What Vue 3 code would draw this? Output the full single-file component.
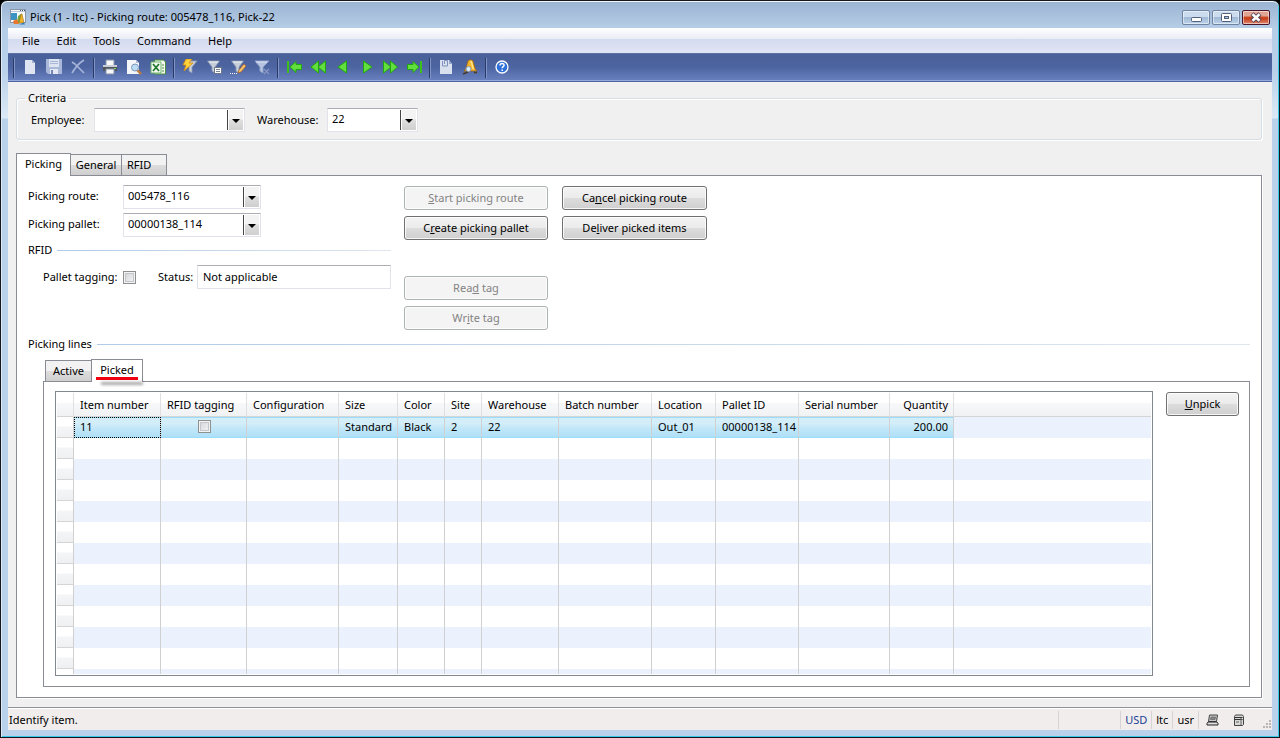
<template>
  <div class="window">
    <header class="title-bar">
      <svg class="icon" viewBox="0 0 16 16" aria-hidden="true">
        <rect x="0.5" y="0.5" width="15" height="13" fill="#f8fafc" stroke="#8a96a8" />
        <path d="M1 2.5h14" stroke="#b9c6d6" />
        <path d="M10 1.5h1M12 1.5h1M14 1.5h1" stroke="#40506a" />
        <rect x="1" y="4" width="6" height="7" fill="#3b93c4" />
        <path d="M7 14l1-7 3-2v9z" fill="#6aa845" />
        <path d="M9 14l2-9h1l2 9z" fill="#f0b42c" stroke="#a36c10" stroke-width="0.6" />
        <path d="M3 12l4-2 2 5H4z" fill="#e8762c" />
        <path d="M9 15.5l5-2 1 2z" fill="#2e7fc2" />
      </svg>
      <h1 class="title-bar__text">Pick (1 - ltc) - Picking route: 005478_116, Pick-22</h1>
      <div class="title-bar__buttons">
        <button type="button" class="caption" aria-label="Minimize">
          <svg viewBox="0 0 26 13"><rect x="8.5" y="6.5" width="10" height="4" rx="1" fill="#fff" stroke="#53607a" /></svg>
        </button>
        <button type="button" class="caption" aria-label="Maximize">
          <svg viewBox="0 0 26 13">
            <rect x="8.5" y="2.5" width="10" height="8" rx="1" fill="#fff" stroke="#53607a" />
            <rect x="11.5" y="5.5" width="4" height="2" fill="#a9c0dc" stroke="#53607a" />
          </svg>
        </button>
        <button type="button" class="caption caption--close" aria-label="Close">
          <svg viewBox="0 0 26 13">
            <path d="M9 3l8 7M17 3l-8 7" stroke="#53405a" stroke-width="4.5" />
            <path d="M9.5 3.3l7 6.4M16.5 3.3l-7 6.4" stroke="#fff" stroke-width="2.6" />
          </svg>
        </button>
      </div>
    </header>

    <nav class="menu-bar" aria-label="Main menu">
      <button v-for="m in menus" :key="m" type="button" class="menu-bar__item">{{ m }}</button>
    </nav>

    <div class="toolbar" role="toolbar" aria-label="Standard">
      <template v-for="(group, g) in toolGroups" :key="g">
        <span class="toolbar__sep" />
        <button
          v-for="tool in group"
          :key="tool.label"
          type="button"
          class="toolbar__btn"
          :aria-label="tool.label"
        >
          <svg class="icon" viewBox="0 0 16 16">
            <path
              v-for="(s, i) in tool.shapes"
              :key="i"
              :d="s[0]"
              :fill="s[1]"
              :stroke="s[2] || 'none'"
              :stroke-width="s[3] || 1"
            />
          </svg>
        </button>
      </template>
    </div>

    <main class="client">
      <fieldset class="criteria">
        <legend class="criteria__legend">Criteria</legend>
        <div class="criteria__row">
          <label for="employee">Employee:</label>
          <span class="combo combo--employee">
            <select id="employee"><option></option></select>
            <span class="combo__arrow" />
          </span>
          <label for="warehouse">Warehouse:</label>
          <span class="combo combo--warehouse">
            <select id="warehouse"><option>22</option></select>
            <span class="combo__arrow" />
          </span>
        </div>
      </fieldset>

      <div class="tabs" role="tablist">
        <button
          v-for="t in mainTabs"
          :key="t"
          type="button"
          role="tab"
          class="tab"
          :class="{ 'tab--active': t === mainTab }"
          :aria-selected="t === mainTab"
          @click="mainTab = t"
        >
          {{ t }}
        </button>
      </div>

      <section class="panel">
        <div class="top">
          <div class="fields">
            <div class="field">
              <label for="route">Picking route:</label>
              <span class="combo">
                <select id="route"><option>005478_116</option></select>
                <span class="combo__arrow" />
              </span>
            </div>
            <div class="field">
              <label for="pallet">Picking pallet:</label>
              <span class="combo">
                <select id="pallet"><option>00000138_114</option></select>
                <span class="combo__arrow" />
              </span>
            </div>
            <h2 class="heading heading--rfid">RFID</h2>
            <div class="rfid">
              <label for="tagging">Pallet tagging:</label>
              <input id="tagging" type="checkbox" class="check" />
              <label for="status">Status:</label>
              <input id="status" type="text" class="text-box" value="Not applicable" readonly />
            </div>
          </div>
          <div class="actions">
            <button type="button" class="btn" disabled><u>S</u>tart picking route</button>
            <button type="button" class="btn">Ca<u>n</u>cel picking route</button>
            <button type="button" class="btn">C<u>r</u>eate picking pallet</button>
            <button type="button" class="btn">De<u>l</u>iver picked items</button>
            <button type="button" class="btn actions__read" disabled>Rea<u>d</u> tag</button>
            <button type="button" class="btn actions__write" disabled>Wr<u>i</u>te tag</button>
          </div>
        </div>

        <h2 class="heading">Picking lines</h2>

        <div class="lines">
          <div class="tabs tabs--inner" role="tablist">
            <button
              v-for="t in lineTabs"
              :key="t"
              type="button"
              role="tab"
              class="tab"
              :class="{ 'tab--active': t === lineTab, 'tab--marked': t === 'Picked' }"
              :aria-selected="t === lineTab"
              @click="lineTab = t"
            >
              {{ t }}
            </button>
          </div>
          <div class="panel panel--inner">
            <div class="grid-box">
              <table class="grid">
                <colgroup>
                  <col class="w-head" />
                  <col v-for="c in columns" :key="c.key" :class="`w-${c.key}`" />
                  <col />
                </colgroup>
                <thead>
                  <tr>
                    <th class="grid__corner"></th>
                    <th v-for="c in columns" :key="c.key" :class="{ right: c.right }">{{ c.title }}</th>
                    <th class="grid__rest"></th>
                  </tr>
                </thead>
                <tbody>
                  <tr v-for="(row, r) in rows" :key="r" :class="{ selected: r === 0 }">
                    <th class="grid__head"></th>
                    <td v-for="c in columns" :key="c.key" :class="{ right: c.right, focused: r === 0 && c.key === 'item' }">
                      <input
                        v-if="c.key === 'rfid' && r === 0"
                        type="checkbox"
                        class="check check--cell"
                        aria-label="RFID tagging"
                      />
                      <template v-else>{{ row[c.key] }}</template>
                    </td>
                    <td class="grid__rest"></td>
                  </tr>
                </tbody>
              </table>
            </div>
            <button type="button" class="btn btn--unpick"><u>U</u>npick</button>
          </div>
        </div>
      </section>
    </main>

    <footer class="status-bar">
      <span class="status-bar__text">Identify item.</span>
      <span class="status-bar__cell status-bar__cell--wide" />
      <span class="status-bar__cell status-bar__cell--link">USD</span>
      <span class="status-bar__cell">ltc</span>
      <span class="status-bar__cell">usr</span>
      <span class="status-bar__cell status-bar__icons">
        <svg viewBox="0 0 13 12" aria-hidden="true">
          <path d="M3.5 1h8l-1 6.500h-8z" fill="#c8c8c8" stroke="#444" />
          <path d="M5 3h4.500l-.5 2.500H4.500z" fill="#888" stroke="#555" stroke-width="0.6" />
          <path d="M1 9.5l1-1.500h9l1 1.500v1.500H1z" fill="#ddd" stroke="#222" />
        </svg>
        <svg viewBox="0 0 13 12" aria-hidden="true">
          <path d="M2.500 2.500l1-1.500h7l1 1.500v8l-1 1h-8z" fill="#d8d8d8" stroke="#444" />
          <path d="M2.500 3.500h8M2.500 5.500h8" fill="none" stroke="#333" />
          <path d="M9 4v7M4 8h3" fill="none" stroke="#666" />
        </svg>
      </span>
      <svg class="status-bar__grip" viewBox="0 0 10 10" aria-hidden="true">
        <path d="M8 1h2M5 4h2M8 4h2M2 7h2M5 7h2M8 7h2" stroke="#b8b4b4" stroke-width="2" />
      </svg>
    </footer>
  </div>
</template>

<script setup>
import { ref } from 'vue';

const menus = ['File', 'Edit', 'Tools', 'Command', 'Help'];
const mainTabs = ['Picking', 'General', 'RFID'];
const lineTabs = ['Active', 'Picked'];
const mainTab = ref('Picking');
const lineTab = ref('Picked');

const GREEN = '#62de3e';
const EDGE = '#22a80f';
const BAR = '#3cc01c';
const funnel = ['M1.500 2h12L9 8v6l-3-2V8z', '#c5ced9', '#8f9bb0', 0.8];

// every shape is [path, fill, stroke, stroke width]
const toolGroups = [
  [
    { label: 'New', shapes: [['M3 1h7l3 3v11H3z', '#dfe5f1'], ['M10 1v3h3z', '#9fb0d4']] },
    {
      label: 'Save',
      shapes: [
        ['M0 0h16v15H2L0 13z', '#a9b8d8'],
        ['M3 0h10v8H3z', '#dde4f1'],
        ['M4 2.500h8M4 4.500h8', 'none', '#a9b8d8'],
        ['M4 10h8v5H4z', '#e4e9f4'],
        ['M5 11h2v4H5z', '#7486b8'],
      ],
    },
    {
      label: 'Delete',
      shapes: [['M2 3l3 2 9 9M14 1C9 4 5 9 2 14', 'none', '#a7b6da', 1.6]],
    },
  ],
  [
    {
      label: 'Print',
      shapes: [
        ['M4 1h8v6H4z', '#f7f8fa', '#8993a8'],
        ['M1 6h14v6H1z', '#50545c'],
        ['M1 6h14v2H1z', '#c9ced6'],
        ['M12 9h2v1h-2z', '#7be05b'],
        ['M4 10h8v5H4z', '#f7f8fa', '#8993a8'],
      ],
    },
    {
      label: 'Print preview',
      shapes: [
        ['M1 1h9l3 3v11H1z', '#f4f6fa'],
        ['M10 1v3h3z', '#b3bfd6'],
        ['M11 11l4 4', 'none', '#c07a34', 2.4],
        ['M5.500 8.500a3.500 3.500 0 1 0 7 0a3.500 3.500 0 1 0-7 0', '#bcdcf4', '#7e98bb'],
      ],
    },
    {
      label: 'Export to Excel',
      shapes: [
        ['M4.500 1h9l2 2v12h-11z', '#f4faf2', '#4b8f3f'],
        ['M1 3h10v11H1z', '#f4faf2', '#6fb46a'],
        ['M3 5l6 7M9 5l-6 7', 'none', '#217a2f', 1.8],
        ['M12 6h2M12 9h2M12 12h2', 'none', '#4b8f3f'],
      ],
    },
  ],
  [
    {
      label: 'Filter by selection',
      shapes: [
        ['M3 2h12L10 8v6l-3-2V8z', '#c9cfd8', '#8f9bb0', 0.8],
        ['M4 0h6L7 4h4l-9 8 2-6H1z', '#ffd43a', '#d68a12', 0.8],
      ],
    },
    {
      label: 'Filter by grid',
      shapes: [
        funnel,
        ['M3 3h9', 'none', '#eef1f5'],
        ['M8.500 8.500h7v6h-7z', '#fff', '#6d7686'],
        ['M10 10.500h4M10 12.500h4', 'none', '#7a8494'],
      ],
    },
    {
      label: 'Advanced filter',
      shapes: [
        funnel,
        ['M3 3h9', 'none', '#eef1f5'],
        ['M8 14l1-3 5-6 2 2-5 6z', '#f6c36a', '#a9602a', 0.8],
        ['M0 14.500h1M2 14.500h1M4 14.500h1M6 14.500h1', 'none', '#fff'],
      ],
    },
    {
      label: 'Remove filter',
      shapes: [
        ['M1 2h14l-6 6v6l-3-2V8z', '#b6c3e0', '#93a3cc'],
        ['M2 3h11', 'none', '#dbe2f1'],
        ['M10 10l5 5M15 10l-5 5', 'none', '#8797c4', 1.2],
      ],
    },
  ],
  [
    {
      label: 'First',
      shapes: [
        ['M1 2h2v12H1z', BAR],
        ['M4 8l6-5.500v3h5.500v5H10v3z', GREEN, EDGE],
      ],
    },
    {
      label: 'Previous page',
      shapes: [
        ['M8 8l7.500-6v12z', GREEN, EDGE],
        ['M1 8l7.500-6v12z', GREEN, EDGE],
      ],
    },
    { label: 'Previous', shapes: [['M4 8l8.500-6v12z', GREEN, EDGE]] },
    { label: 'Next', shapes: [['M14 8L5.500 2v12z', GREEN, EDGE]] },
    {
      label: 'Next page',
      shapes: [
        ['M9 8L1.500 2v12z', GREEN, EDGE],
        ['M15.500 8L8.500 2v12z', GREEN, EDGE],
      ],
    },
    {
      label: 'Last',
      shapes: [
        ['M14 2h2v12h-2z', BAR],
        ['M13 8L7 2.500v3H1.500v5H7v3z', GREEN, EDGE],
      ],
    },
  ],
  [
    {
      label: 'Documents',
      shapes: [
        ['M2 1h9l3 4v10H2z', '#d9e0ee'],
        ['M11 1v4h3z', '#97a8cf'],
        ['M4.500 2v5h5V1.500H6.500V5', 'none', '#7e90bb'],
      ],
    },
    {
      label: 'Alert',
      shapes: [
        ['M2 12c3-2 3-10 5-11h3c2 1 2 9 5 11z', '#f6b52a', '#9c6412', 0.8],
        ['M8.500 2c2 1 1 5 3 8', 'none', '#ffe58a', 1.6],
        ['M6 13l-5 2M12 13.500h3', 'none', '#4b3a2a', 1.5],
        ['M4 10a2.500 2.500 0 1 0 5 0a2.500 2.500 0 1 0-5 0', '#d9ecf8', '#8a98a8'],
      ],
    },
  ],
  [
    {
      label: 'Help',
      shapes: [
        ['M2 8a6 6 0 1 0 12 0a6 6 0 1 0-12 0', '#2e6fd8', '#fff', 1.3],
        ['M6 6.500c0-3 4.500-2.500 4 0c-.3 1.200-1.800 1.200-1.800 2.800M8.200 10.500v1.500', 'none', '#fff', 1.5],
      ],
    },
  ],
];

const columns = [
  { key: 'item', title: 'Item number' },
  { key: 'rfid', title: 'RFID tagging' },
  { key: 'config', title: 'Configuration' },
  { key: 'size', title: 'Size' },
  { key: 'color', title: 'Color' },
  { key: 'site', title: 'Site' },
  { key: 'warehouse', title: 'Warehouse' },
  { key: 'batch', title: 'Batch number' },
  { key: 'location', title: 'Location' },
  { key: 'pallet', title: 'Pallet ID' },
  { key: 'serial', title: 'Serial number' },
  { key: 'quantity', title: 'Quantity', right: true },
];

const picked = {
  item: '11',
  size: 'Standard',
  color: 'Black',
  site: '2',
  warehouse: '22',
  location: 'Out_01',
  pallet: '00000138_114',
  quantity: '200.00',
};

// blank lines fill the rest of the grid
const rows = [picked, ...Array.from({ length: 12 }, () => ({}))];
</script>

<style>
body {
  margin: 0;
  background: #000;
}
</style>

<style scoped>
.window {
  box-sizing: border-box;
  display: flex;
  flex-direction: column;
  height: 100vh;
  padding: 0 7px 7px;
  border: 1px solid #16161c;
  border-radius: 7px 7px 0 0;
  background: linear-gradient(#9ab3d2 0, #b5cde6 27px, #b9d1ea 70px, #dce9f6 117px, #b9d1ea 118px);
  box-shadow:
    inset 0 1px #f2f7fc,
    inset 1px 0 #dcebf8,
    inset -1px -1px #35c8e8;
  color: #000;
  font-family: 'Noto Sans', 'Open Sans', sans-serif;
  font-size: 11px;
  line-height: 16px;
}

button,
select,
input {
  box-sizing: border-box;
  margin: 0;
  padding: 0;
  border: 0;
  background: none;
  color: inherit;
  font: inherit;
}

.icon {
  display: block;
  width: 16px;
  height: 16px;
}

.title-bar {
  display: flex;
  flex: none;
  align-items: center;
  gap: 4px;
  height: 27px;
  padding: 5px 2px 0;
  box-sizing: border-box;
}

.title-bar__text {
  flex: 1;
  margin: 0;
  font-size: 11px;
  font-weight: 400;
}

.title-bar__buttons {
  display: flex;
  gap: 2px;
}

.caption {
  width: 28px;
  height: 15px;
  border: 1px solid #6f829f;
  border-radius: 2px;
  background: linear-gradient(#cbdcee 50%, #a3bad6 50%, #b9d2ea);
  box-shadow: inset 0 0 0 1px rgba(255, 255, 255, 0.5);
}

.caption svg {
  display: block;
  width: 26px;
  height: 13px;
}

.caption--close {
  border-color: #4a1428;
  background: linear-gradient(#e0a493 40%, #cc4a22 45%, #c8401c 60%, #dd8a72);
}

.menu-bar {
  display: flex;
  flex: none;
  gap: 17px;
  height: 25px;
  padding-left: 14px;
  background: linear-gradient(#fff, #e9ecf5 44%, #d5dbef 45%, #dfe4f5);
}

.toolbar {
  display: flex;
  flex: none;
  align-items: center;
  box-sizing: border-box;
  height: 29px;
  padding-left: 2px;
  border-top: 1px solid #5c70a4;
  border-bottom: 1px solid #4a64a4;
  background: linear-gradient(#485f99, #4d65a1 50%, #6a81c0);
  box-shadow: inset 0 -1px #93a8d8;
}

.toolbar__sep {
  width: 1px;
  height: 20px;
  margin: 0 3px;
  border-right: 1px solid #7f93c6;
  background: #2c3c68;
}

.toolbar__btn {
  display: flex;
  justify-content: center;
  width: 24px;
  padding-bottom: 1px;
}

.client {
  display: flex;
  flex: 1;
  flex-direction: column;
  min-height: 0;
  padding: 8px 10px 9px 8px;
  background: #f0f0f0;
}

.criteria {
  min-width: 0;
  margin: 0;
  padding: 0 14px 7px;
  border: 1px solid #d5dfe5;
  border-radius: 3px;
  box-shadow:
    1px 1px #fff,
    inset 1px 1px #fff;
}

.criteria__legend {
  margin-left: -6px;
  padding: 0 3px;
}

.criteria__row {
  display: grid;
  grid-template-columns: 63px 163px 70px auto;
  align-items: center;
  justify-content: start;
  padding-top: 2px;
}

.combo {
  display: grid;
  box-sizing: border-box;
  width: 138px;
  height: 24px;
  border: 1px solid #e2e3ea;
  border-top-color: #abadb3;
  border-radius: 1px;
  background: #fff;
}

.combo > * {
  grid-area: 1 / 1;
}

.combo select {
  padding: 0 20px 2px 4px;
  appearance: none;
}

.combo__arrow {
  position: relative;
  justify-self: end;
  width: 15px;
  margin: 1px;
  border-left: 1px solid #444;
  background: linear-gradient(90deg, #fff 1px, transparent 1px), linear-gradient(#f3f3f3 45%, #dedede 50%, #cfcfcf);
  pointer-events: none;
}

.combo__arrow::after {
  content: '';
  position: absolute;
  top: 9px;
  left: 4px;
  border: solid transparent;
  border-width: 4px 4px 0;
  border-top-color: #000;
}

.combo--employee {
  width: 151px;
}

.combo--warehouse {
  width: 91px;
}

.tabs {
  display: flex;
  align-items: flex-end;
  margin-top: 13px;
}

.tab {
  position: relative;
  min-width: 52px;
  height: 21px;
  margin-left: -1px;
  padding: 0 4px;
  border: 1px solid #898c95;
  border-bottom: 0;
  background: linear-gradient(#f2f2f2 48%, #dddddd 50%, #cfcfcf);
}

.tab:first-child {
  margin-left: 0;
}

.tab:last-child {
  min-width: 46px;
  padding: 0 4px 0 5px;
  text-align: left;
}

.tab--active {
  z-index: 1;
  min-width: 55px;
  height: 23px;
  margin-bottom: -1px;
  padding: 0 6px 2px;
  background: #fff;
}

.tab--marked::after {
  content: '';
  position: absolute;
  right: 4px;
  bottom: 2px;
  left: 4px;
  height: 3px;
  background: #f00010;
  box-shadow: 5px 5px 3px rgba(0, 0, 0, 0.35);
}

.panel {
  display: flex;
  flex: 1;
  flex-direction: column;
  min-height: 0;
  padding: 9px 11px 10px;
  border: 1px solid #898c95;
  background: #fff;
  box-shadow: 1px 1px #fff;
}

.top {
  display: flex;
  gap: 13px;
}

.fields {
  width: 363px;
}

.field {
  display: grid;
  grid-template-columns: 95px auto;
  align-items: center;
  justify-content: start;
  margin-bottom: 4px;
}

.field label {
  padding-bottom: 2px;
}

.heading {
  display: flex;
  flex: none;
  align-items: center;
  gap: 5px;
  margin: 0;
  font-size: 11px;
  font-weight: 400;
}

.heading::after {
  content: '';
  flex: 1;
  height: 1px;
  background: linear-gradient(90deg, #b0cbe8, #dfe6ee);
}

.heading--rfid {
  margin-top: 5px;
}

.rfid {
  display: grid;
  grid-template-columns: 80px 35px 39px 1fr;
  align-items: center;
  margin-top: 7px;
  padding-left: 15px;
}

.check {
  width: 13px;
  height: 13px;
  border: 1px solid #8e8f8f;
  background: linear-gradient(135deg, #cfd3d8, #f6f6f6);
  box-shadow:
    inset 0 0 0 1px #f4f4f4,
    inset 0 0 0 2px #c3c7cc;
  appearance: none;
}

.check--cell {
  display: block;
  margin: 0 auto;
}

.text-box {
  min-width: 0;
  height: 24px;
  padding: 0 5px 2px;
  border: 1px solid #e2e3ea;
  border-top-color: #abadb3;
  border-radius: 1px;
}

.actions {
  display: grid;
  grid-template-columns: 144px 145px;
  grid-template-rows: repeat(5, 24px);
  gap: 6px 14px;
  padding: 1px 0 6px;
}

.actions__read {
  grid-area: 4 / 1;
}

.actions__write {
  grid-area: 5 / 1;
}

.btn {
  height: 24px;
  border: 1px solid #707070;
  border-radius: 3px;
  background: linear-gradient(#f3f3f3, #ebebeb 49%, #dddddd 50%, #cfcfcf);
  box-shadow: inset 0 0 0 1px rgba(255, 255, 255, 0.8);
}

.btn:disabled {
  border-color: #adb2b5;
  background: #f4f4f4;
  color: #838383;
}

.lines {
  display: flex;
  flex: 1;
  flex-direction: column;
  min-height: 0;
  margin-left: 15px;
}

.tabs--inner {
  margin: 7px 0 0 2px;
}

.tabs--inner .tab {
  min-width: 47px;
}

.tabs--inner .tab--active {
  min-width: 52px;
  padding: 0 6px 3px;
  text-align: center;
}

.panel--inner {
  flex-direction: row;
  align-items: flex-start;
  gap: 13px;
  padding: 9px 10px 10px 11px;
}

.grid-box {
  flex: 1;
  align-self: stretch;
  min-width: 0;
  padding: 1px;
  overflow: clip;
  overflow-clip-margin: content-box;
  border: 1px solid #828790;
}

.btn--unpick {
  flex: none;
  width: 73px;
  margin-top: 1px;
}

.grid {
  width: 100%;
  table-layout: fixed;
  border-collapse: separate;
  border-spacing: 0;
}

.grid th,
.grid td {
  box-sizing: border-box;
  height: 21px;
  padding: 0 6px;
  border-right: 1px solid #d0d0d0;
  font-weight: 400;
  text-align: left;
  white-space: nowrap;
}

.grid thead th {
  height: 24px;
  padding-top: 1px;
  border-right-color: #e0e0e3;
  border-bottom: 1px solid #d5d5d5;
  background: linear-gradient(#fff 42%, #f7f8fa 45%, #f1f2f4);
}

.grid tbody td {
  padding: 0 5px 2px 6px;
}

.grid tbody tr:nth-child(odd) td {
  background: #ebf2fe;
}

.grid tbody .grid__head {
  padding: 0;
  border-bottom: 1px solid #d5d5d5;
  background: linear-gradient(#fff 45%, #f4f5f7 50%, #eff0f2);
}

.grid thead .grid__rest,
.grid tbody .grid__rest {
  border-right: 0;
}

.grid th.right,
.grid td.right {
  padding-right: 5px;
  text-align: right;
}

.grid tbody .selected td:not(.grid__rest) {
  border-top: 1px solid #99defd;
  border-bottom: 1px solid #99defd;
  background: linear-gradient(#d3edf9 30%, #c4e8f8 50%, #aee0f8);
}

.grid tbody .selected td.focused {
  outline: 1px dotted #000;
  outline-offset: -1px;
}

.w-head {
  width: 17px;
}

.w-item {
  width: 87px;
}

.w-rfid {
  width: 86px;
}

.w-config {
  width: 92px;
}

.w-size {
  width: 59px;
}

.w-color {
  width: 47px;
}

.w-site {
  width: 37px;
}

.w-warehouse {
  width: 77px;
}

.w-batch {
  width: 93px;
}

.w-location {
  width: 64px;
}

.w-pallet {
  width: 83px;
}

.w-serial {
  width: 91px;
}

.w-quantity {
  width: 64px;
}

.status-bar {
  display: flex;
  flex: none;
  align-items: center;
  box-sizing: border-box;
  height: 23px;
  padding: 1px 1px 0;
  border-top: 1px solid #8f9194;
  background: #f1edec;
  box-shadow: inset 0 1px #fff;
}

.status-bar__text {
  flex: 1;
}

.status-bar__cell {
  padding: 1px 4px;
  border-left: 1px solid #d5d3d3;
}

.status-bar__cell--wide {
  width: 53px;
  height: 16px;
}

.status-bar__cell--link {
  color: #1c3f94;
}

.status-bar__icons {
  display: flex;
  gap: 13px;
  align-items: center;
  height: 16px;
  padding: 1px 16px 1px 7px;
}

.status-bar__icons svg {
  width: 13px;
  height: 12px;
}

.status-bar__grip {
  align-self: flex-end;
  width: 10px;
  height: 10px;
}
</style>
